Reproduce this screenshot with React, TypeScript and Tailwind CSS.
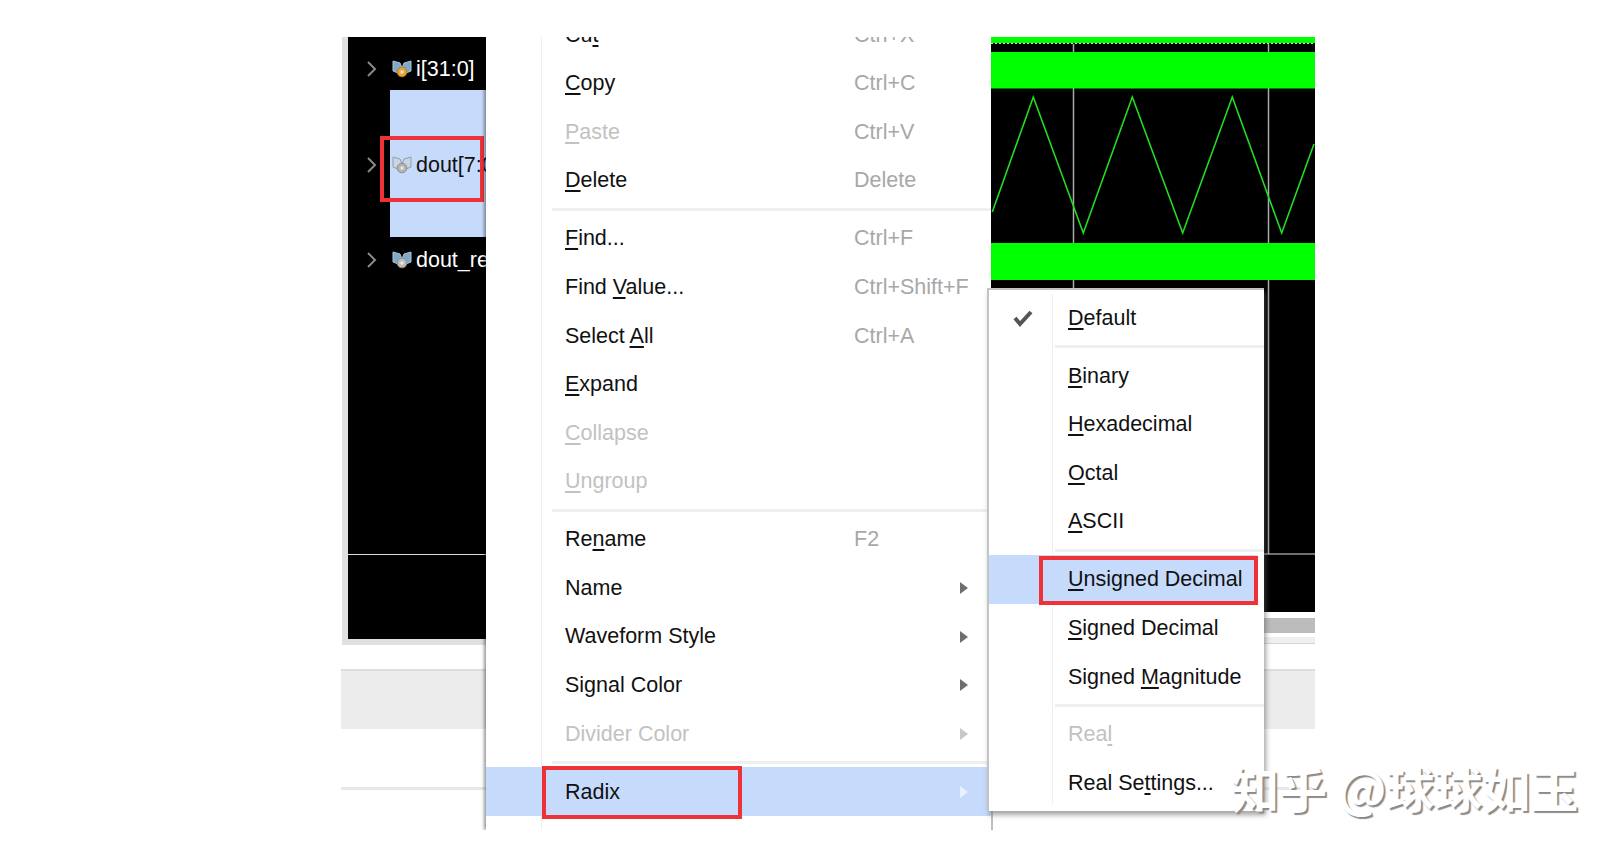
import { ReactNode } from "react";

type Item = {
  label: string;
  u?: number;
  shortcut?: string;
  disabled?: boolean;
  arrow?: boolean;
  active?: boolean;
  sep?: boolean;
};

const mainItems: Item[] = [
  { label: "Cut", u: 2, shortcut: "Ctrl+X" },
  { label: "Copy", u: 0, shortcut: "Ctrl+C" },
  { label: "Paste", u: 0, shortcut: "Ctrl+V", disabled: true },
  { label: "Delete", u: 0, shortcut: "Delete" },
  { sep: true, label: "" },
  { label: "Find...", u: 0, shortcut: "Ctrl+F" },
  { label: "Find Value...", u: 5, shortcut: "Ctrl+Shift+F" },
  { label: "Select All", u: 7, shortcut: "Ctrl+A" },
  { label: "Expand", u: 0 },
  { label: "Collapse", u: 0, disabled: true },
  { label: "Ungroup", u: 0, disabled: true },
  { sep: true, label: "" },
  { label: "Rename", u: 2, shortcut: "F2" },
  { label: "Name", arrow: true },
  { label: "Waveform Style", arrow: true },
  { label: "Signal Color", arrow: true },
  { label: "Divider Color", arrow: true, disabled: true },
  { sep: true, label: "" },
  { label: "Radix", arrow: true, active: true },
];

const radixItems: Item[] = [
  { label: "Default", u: 0 },
  { sep: true, label: "" },
  { label: "Binary", u: 0 },
  { label: "Hexadecimal", u: 0 },
  { label: "Octal", u: 0 },
  { label: "ASCII", u: 0 },
  { sep: true, label: "" },
  { label: "Unsigned Decimal", u: 0, active: true },
  { label: "Signed Decimal", u: 0 },
  { label: "Signed Magnitude", u: 7 },
  { sep: true, label: "" },
  { label: "Real", u: 3, disabled: true },
  { label: "Real Settings...", u: 7 },
];

function Mnemonic({ item }: { item: Item }) {
  if (item.u === undefined) return <>{item.label}</>;
  return (
    <>
      {item.label.slice(0, item.u)}
      <span className="underline decoration-[1.5px] underline-offset-[3px]">{item.label[item.u]}</span>
      {item.label.slice(item.u + 1)}
    </>
  );
}

function SignalIcon({ wing, edge, dot, ring }: { wing: string; edge: string; dot: string; ring: string }) {
  return (
    <svg width="20" height="18" viewBox="0 0 20 18" className="shrink-0">
      <path d="M1 1 L8 3 L10 8 L6 13 L1 11 Z" fill={wing} stroke={edge} strokeWidth="1" />
      <path d="M19 1 L12 3 L10 8 L14 13 L19 11 Z" fill={wing} stroke={edge} strokeWidth="1" />
      <circle cx="10" cy="12" r="4.8" fill={dot} stroke={ring} strokeWidth="1" />
      <circle cx="10" cy="12" r="1.7" fill="#f4f4f4" fillOpacity="0.8" />
    </svg>
  );
}

function Chevron({ color }: { color: string }) {
  return (
    <svg width="11" height="18" viewBox="0 0 11 18">
      <path d="M2 2 L9 9 L2 16" fill="none" stroke={color} strokeWidth="2" />
    </svg>
  );
}

function TreeRow({ name, icon, children }: { name: string; icon: ReactNode; children?: ReactNode }) {
  return (
    <div className="flex h-[32px] items-center">
      <div className="flex w-[42px] justify-center pl-[5px]">
        <Chevron color="#8a8a8a" />
      </div>
      <div className="flex items-center gap-[4px] pl-[2px] whitespace-nowrap text-white">
        {icon}
        {name}
      </div>
      {children}
    </div>
  );
}

function Waveform() {
  return (
    <svg width="324" height="575" viewBox="0 0 324 575" className="block">
      <rect width="324" height="575" fill="#000" />
      <line x1="82.5" y1="7" x2="82.5" y2="517" stroke="#aaa" strokeWidth="1.5" />
      <line x1="277.5" y1="7" x2="277.5" y2="517" stroke="#aaa" strokeWidth="1.5" />
      <rect width="324" height="6" fill="#00ff00" />
      <line x1="0" y1="6.5" x2="324" y2="6.5" stroke="#b8f0b8" strokeDasharray="2 2" />
      <rect y="15" width="324" height="36.5" fill="#00ff00" />
      <polyline
        points="1.3,175 42.3,60 92.3,196 141.3,60 191.7,196 241.3,60 290.7,196 323,107"
        fill="none"
        stroke="#22dd22"
        strokeWidth="1.6"
      />
      <rect y="206" width="324" height="37" fill="#00ff00" />
      <line x1="0" y1="517" x2="324" y2="517" stroke="#ddd" />
    </svg>
  );
}

function Separator() {
  return (
    <div className="flex h-[9.4px] items-center pl-[66px]">
      <div className="h-[3px] w-full bg-[#efefef]" />
    </div>
  );
}

function MenuRow({ item }: { item: Item }) {
  if (item.sep) return <Separator />;
  return (
    <div className={`relative flex h-[48.6px] items-center pl-[79px] ${item.active ? "bg-[#c6dbfb]" : ""}`}>
      <div className={`w-[289px] whitespace-nowrap ${item.disabled ? "text-[#c2c2c2]" : "text-[#111]"}`}>
        <Mnemonic item={item} />
      </div>
      {item.shortcut && <div className="whitespace-nowrap text-[#a8a8a8]">{item.shortcut}</div>}
      {item.arrow && (
        <svg width="8" height="12" viewBox="0 0 8 12" className="absolute left-[474px]">
          <path d="M0 0 L8 6 L0 12 Z" fill={item.active ? "#e8f0fd" : item.disabled ? "#c8c8c8" : "#6f6f6f"} />
        </svg>
      )}
      {item.active && (
        <div className="absolute left-[56px] top-[-1px] h-[53px] w-[200px] border-[4px] border-[#ee3338]" />
      )}
    </div>
  );
}

function RadixRow({ item }: { item: Item }) {
  if (item.sep) return <Separator />;
  return (
    <div className={`relative flex h-[48.6px] items-center pl-[79px] ${item.active ? "mr-[7px] bg-[#c6dbfb]" : ""}`}>
      <span className={`relative whitespace-nowrap ${item.disabled ? "text-[#c2c2c2]" : "text-[#111]"}`}>
        <Mnemonic item={item} />
      </span>
      {item.active && (
        <div className="absolute left-[50px] top-[1px] h-[49px] w-[219px] border-[4px] border-[#ee3338]" />
      )}
    </div>
  );
}

export default function App() {
  return (
    <div className="relative h-[855px] w-[1620px] overflow-hidden bg-white font-['Liberation_Sans',Arial,sans-serif] text-[21.5px]">
      {/* window behind the menus */}
      <div className="ml-[342px] w-[973px] pt-[37px]">
        <div className="flex h-[608px]">
          <div className="flex h-full w-[506px] flex-col border-b-[6px] border-l-[6px] border-[#e0e0e0] bg-black">
            <div className="pt-[16px]">
              <TreeRow
                name="i[31:0]"
                icon={<SignalIcon wing="#7fa9c9" edge="#a9c4d8" dot="#e8a53a" ring="#b9791f" />}
              />
            </div>
            <div className="relative mt-[5px] flex h-[147px] items-center">
              <div className="flex h-full w-[42px] items-center justify-center pt-[3px] pl-[5px]">
                <Chevron color="#8a8a8a" />
              </div>
              <div className="flex h-[147px] w-[96px] items-center gap-[4px] overflow-hidden bg-[#c6dbfb] pt-[3px] pl-[2px] whitespace-nowrap text-[#111]">
                <SignalIcon wing="#c9d6e0" edge="#86a0b2" dot="#b4b4b4" ring="#8d8d8d" />
                dout[7:0]
              </div>
              <div className="absolute left-[32px] top-[46px] h-[66px] w-[104px] border-[4px] border-[#ee3338]" />
            </div>
            <div className="flex h-[46px] items-center">
              <TreeRow
                name="dout_reg[7:0]"
                icon={<SignalIcon wing="#7fa9c9" edge="#a9c4d8" dot="#bdbdbd" ring="#8d8d8d" />}
              />
            </div>
            <div className="mt-auto h-[85px] border-t border-[#ddd]" />
          </div>
          <div className="ml-[143px] w-[324px]">
            <Waveform />
            <div className="mt-[6px] h-[15px] bg-[#bcbcbc]" />
            <div className="mt-[4px] h-[7px] border-b border-[#d5d5d5] bg-[#efefef]" />
          </div>
        </div>
        <div className="ml-[-1px] mt-[24px] h-[60px] border-t-[2px] border-[#dedede] bg-[#ececec]" />
        <div className="ml-[-1px] mt-[58px] h-[3px] bg-[#e8e8e8]" />
      </div>

      {/* context menu */}
      <div className="absolute left-[486px] top-[37px] h-[793px] w-[505px] overflow-hidden bg-white shadow-[-2px_0_3px_rgba(0,0,0,0.4)] [clip-path:inset(0_0_0_-6px)]">
        <div className="relative mt-[-26.6px] bg-white">
          <div className="absolute left-[55px] top-0 h-[900px] w-px bg-[#efefef]" />
          {mainItems.map((item, i) => (
            <MenuRow key={i} item={item} />
          ))}
        </div>
      </div>
      <div className="absolute left-[991px] top-[811px] h-[19px] w-[2px] bg-[#bdbdbd]" />

      {/* radix submenu */}
      <div className="absolute left-[987px] top-[288px] h-[523px] w-[277px] border-t-[2px] border-l-[2px] border-[#c4c4c4] bg-white pt-[3.4px] shadow-[2px_4px_5px_rgba(90,90,90,0.55)]">
        <div className="absolute left-[63px] top-[4px] h-[510px] w-px bg-[#efefef]" />
        <div className="absolute left-[23px] top-[18px]">
          <svg width="22" height="20" viewBox="0 0 22 20">
            <path d="M3 10 L8 16 L19 4" fill="none" stroke="#555" strokeWidth="4" />
          </svg>
        </div>
        {radixItems.map((item, i) => (
          <RadixRow key={i} item={item} />
        ))}
      </div>

      {/* watermark */}
      <div className="absolute left-[1231px] top-[751px] whitespace-nowrap font-['Noto_Sans_CJK_SC',sans-serif] text-[48px] font-bold text-white [text-shadow:2px_2px_1px_#8a8a8a]">
        知乎 @球球如玉
      </div>
    </div>
  );
}
